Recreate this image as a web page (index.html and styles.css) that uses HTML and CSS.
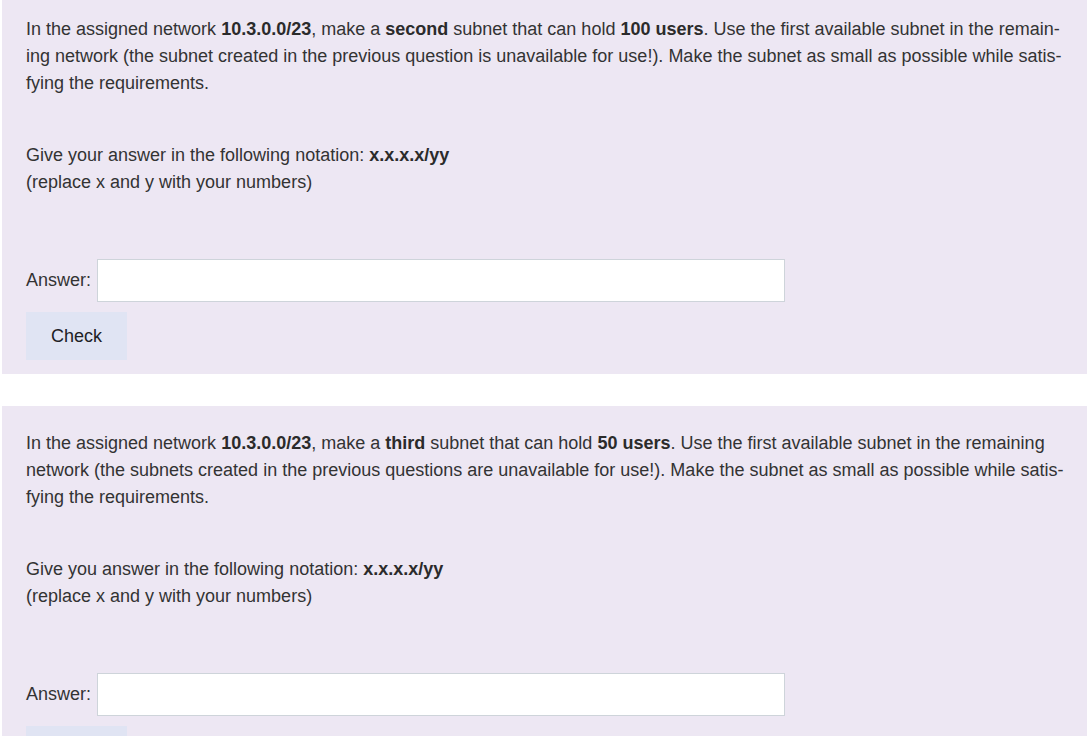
FILE: index.html
```html
<!DOCTYPE html>
<html>
<head>
<meta charset="utf-8">
<link rel="stylesheet" href="styles.css">
</head>
<body>
<div class="page">
  <section class="question first">
    <p class="text">In the assigned network <b>10.3.0.0/23</b>, make a <b>second</b> subnet that can hold <b>100 users</b>. Use the first available subnet in the remain-<br>ing network (the subnet created in the previous question is unavailable for use!). Make the subnet as small as possible while satis-<br>fying the requirements.</p>
    <p class="text notation">Give your answer in the following notation: <b>x.x.x.x/yy</b><br>(replace x and y with your numbers)</p>
    <div class="answer-row">
      <label class="answer-label">Answer:</label>
      <input class="answer-input" type="text">
    </div>
    <button class="check">Check</button>
  </section>
  <section class="question">
    <p class="text">In the assigned network <b>10.3.0.0/23</b>, make a <b>third</b> subnet that can hold <b>50 users</b>. Use the first available subnet in the remaining<br>network (the subnets created in the previous questions are unavailable for use!). Make the subnet as small as possible while satis-<br>fying the requirements.</p>
    <p class="text notation">Give you answer in the following notation: <b>x.x.x.x/yy</b><br>(replace x and y with your numbers)</p>
    <div class="answer-row">
      <label class="answer-label">Answer:</label>
      <input class="answer-input" type="text">
    </div>
    <button class="check">Check</button>
  </section>
</div>
</body>
</html>
```
FILE: styles.css
```css
html, body {
  margin: 0;
  padding: 0;
  background: #ffffff;
}
body {
  font-family: "Liberation Sans", Arial, sans-serif;
  font-size: 18px;
  color: #333333;
  overflow: hidden;
}
.page {
  margin-top: -8px;
}
.question {
  background: #ede7f3;
  margin-left: 2px;
  padding: 24px 24px 14px 24px;
  margin-bottom: 32px;
}
.text {
  margin: 0;
  line-height: 27px;
  white-space: nowrap;
}
.text b {
  font-weight: bold;
  color: #2b2b2b;
}
.notation {
  margin-top: 45px;
}
.answer-row {
  display: flex;
  align-items: center;
  margin-top: 63px;
}
.answer-label {
  margin-right: 6px;
}
.answer-input {
  width: 688px;
  height: 43px;
  box-sizing: border-box;
  border: 1px solid #ced4da;
  background: #fff;
  margin: 0;
  padding: 6px 12px;
  font: inherit;
}
.check {
  display: block;
  margin-top: 10px;
  width: 101px;
  height: 48px;
  border: none;
  background: #e0e4f3;
  color: #1d2125;
  font-family: "Liberation Sans", Arial, sans-serif;
  font-size: 18px;
  padding: 0;
}
```
